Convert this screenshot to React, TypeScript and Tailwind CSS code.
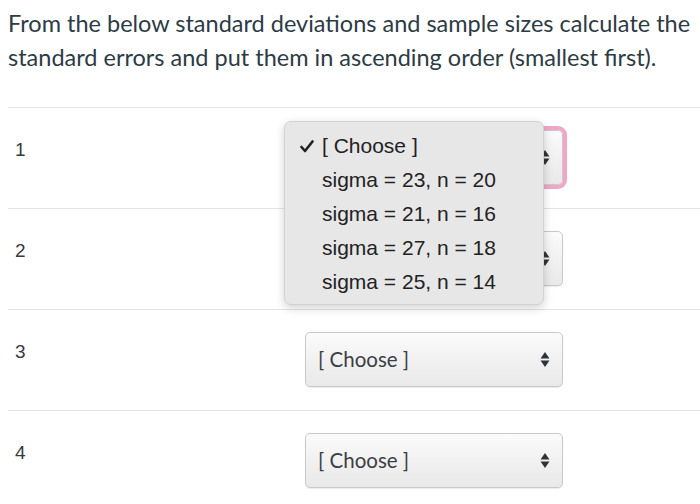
const options = [
  "sigma = 23, n = 20",
  "sigma = 21, n = 16",
  "sigma = 27, n = 18",
  "sigma = 25, n = 14",
];

function Arrows() {
  return (
    <svg width="10" height="17" viewBox="0 0 10 17" className="shrink-0">
      <path d="M5 1 L9.5 7.5 L0.5 7.5 Z" fill="#2f3338" />
      <path d="M5 16 L9.5 9.5 L0.5 9.5 Z" fill="#2f3338" />
    </svg>
  );
}

function FakeSelect({ focused }: { focused?: boolean }) {
  return (
    <div
      className={`mt-[22px] w-[258px] h-[55px] rounded-[5px] border border-[#c9c9c9] bg-gradient-to-b from-[#fbfbfb] via-[#f1f1f1] to-[#e9e9e9] shadow-[0_1px_1px_rgba(0,0,0,0.08)] flex items-center justify-between pl-[12px] pr-[12px] ${
        focused ? "ring-[4px] ring-[#f0a6c7]" : ""
      }`}
    >
      <span className="text-[20.5px] text-[#3b3f44] font-['Lato',sans-serif]">
        [ Choose ]
      </span>
      <Arrows />
    </div>
  );
}

export default function App() {
  return (
    <div className="relative w-[700px] h-[504px] bg-white overflow-hidden font-['Lato',sans-serif] text-[#2d3b45]">
      <p className="pl-[8px] pt-[6px] text-[23.5px] leading-[34px] h-[107px] whitespace-nowrap">
        From the below standard deviations and sample sizes calculate the
        <br />
        standard errors and put them in ascending order (smallest first).
      </p>

      {[1, 2, 3, 4].map((n, i) => (
        <div key={n} className="ml-[8px] border-t border-[#e2e4e6] h-[101px] flex">
          <div className="w-[297px] pl-[7px] pt-[31px] text-[19px] leading-[22px] text-[#3a3a3a] font-['Liberation_Sans',Arial,sans-serif]">
            {n}
          </div>
          <FakeSelect focused={i === 0} />
        </div>
      ))}

      {/* open native dropdown menu */}
      <div className="absolute left-[284px] top-[121px] w-[260px] h-[184px] rounded-[7px] bg-[#e7e7e7] border border-[#d2d2d2] shadow-[0_3px_10px_rgba(0,0,0,0.18)] pt-[7px] font-['Liberation_Sans',Arial,sans-serif] text-[21px] text-[#222]">
        <div className="flex items-center h-[34px]">
          <span className="w-[37px] pl-[15px] flex items-center">
            <svg width="14" height="13" viewBox="0 0 14 13">
              <path
                d="M1.5 7 L5 11 L12.5 1.5"
                fill="none"
                stroke="#222"
                strokeWidth="2.6"
                strokeLinecap="round"
                strokeLinejoin="round"
              />
            </svg>
          </span>
          <span>[ Choose ]</span>
        </div>
        {options.map((o) => (
          <div key={o} className="flex items-center h-[34px] pl-[37px]">
            {o}
          </div>
        ))}
      </div>
    </div>
  );
}
